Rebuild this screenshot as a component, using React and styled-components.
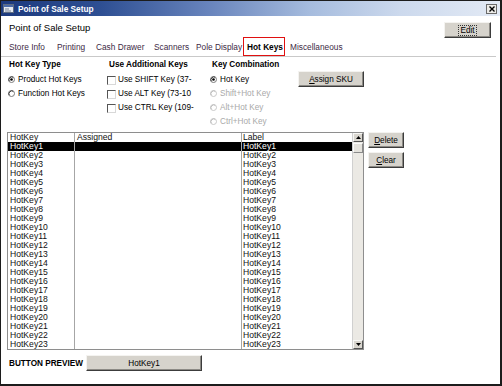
import React from 'react';
import styled, { createGlobalStyle } from 'styled-components';

const GlobalStyle = createGlobalStyle`
  html, body {
    margin: 0;
    padding: 0;
    background: #fff;
  }
  body {
    font-family: "Liberation Sans", Arial, sans-serif;
  }
`;

const Window = styled.div`
  width: 502px;
  height: 386px;
  box-sizing: border-box;
  border-style: solid;
  border-color: #1c1c1c;
  border-width: 1px 2px 2px 1px;
  background: #fff;
  display: flex;
  flex-direction: column;
  overflow: hidden;
  font-family: "Liberation Sans", Arial, sans-serif;
  color: #000;
`;

const TitleBar = styled.div`
  height: 15px;
  flex: none;
  display: flex;
  align-items: center;
  padding: 0 2px 0 2px;
  background: linear-gradient(to right, #1c3a7e 0%, #2e4f93 20%, #6985bd 42%, #a6bcde 62%, #ccd9ed 80%, #e3eaf5 100%);
`;

const TitleText = styled.span`
  margin-left: 4px;
  font-size: 8.3px;
  font-weight: bold;
  color: #fff;
  flex: 1;
`;

const CloseBox = styled.div`
  width: 9px;
  height: 8px;
  margin-right: 1px;
  border: 1px solid #6a6a6a;
  background: #ecebe8;
  display: flex;
  align-items: center;
  justify-content: center;
`;

const HeaderRow = styled.div`
  height: 16px;
  margin-top: 5px;
  display: flex;
  justify-content: space-between;
  align-items: flex-start;
  flex: none;
`;

const Heading = styled.div`
  padding-left: 8px;
  font-size: 9.5px;
  line-height: 13px;
  color: #000;
`;

const Button = styled.button`
  box-sizing: border-box;
  width: ${p => p.$w}px;
  height: 16px;
  padding: 0;
  margin: 0;
  font-family: "Liberation Sans", Arial, sans-serif;
  font-size: 8.2px;
  color: #000;
  background: #d6d3cc;
  border: 1px solid;
  border-color: #f4f3f0 #3c3c3c #3c3c3c #f4f3f0;
  box-shadow: inset -1px -1px 0 #8c8a85;
  display: flex;
  align-items: center;
  justify-content: center;
  flex: none;
  u {
    text-decoration: underline;
  }
`;

const EditButton = styled(Button)`
  margin-top: 1px;
  margin-right: 9px;
  span {
    outline: 1px dotted #333;
    padding: 0 1px;
    line-height: 9px;
  }
`;

const TabBar = styled.div`
  height: 20px;
  flex: none;
  box-sizing: border-box;
  display: flex;
  padding-left: 5px;
  margin-right: 4px;
  border-bottom: 1px solid #c9c9c9;
`;

const Tab = styled.div`
  box-sizing: border-box;
  width: ${p => (p.$w ? `${p.$w}px` : 'auto')};
  height: 19px;
  padding-left: 3px;
  margin-right: ${p => (p.$active ? 2 : 0)}px;
  display: flex;
  align-items: center;
  font-size: 8.3px;
  white-space: nowrap;
  font-weight: ${p => (p.$active ? 'bold' : 'normal')};
  color: ${p => (p.$active ? '#000' : '#3d2a45')};
  border: ${p => (p.$active ? '1px solid #e01010' : 'none')};
`;

const OptionsRow = styled.div`
  display: flex;
  margin-top: 3px;
  padding-left: 7px;
  flex: none;
`;

const Group = styled.div`
  width: ${p => p.$w}px;
  display: flex;
  flex-direction: column;
`;

const GroupTitle = styled.div`
  font-size: 8.2px;
  font-weight: bold;
  line-height: 10px;
  padding-left: ${p => p.$indent}px;
  margin-bottom: 2px;
  white-space: nowrap;
`;

const OptionRow = styled.div`
  height: 14px;
  display: flex;
  align-items: center;
  font-size: 8.2px;
  white-space: nowrap;
  color: ${p => (p.$disabled ? '#a9a9a9' : '#000')};
`;

const RadioMark = styled.svg`
  width: 7px;
  height: 7px;
  margin-right: 3px;
  flex: none;
`;

const CheckMark = styled.span`
  box-sizing: border-box;
  width: 9px;
  height: 9px;
  margin-right: 2px;
  margin-top: 2px;
  border: 1px solid;
  border-color: #555 #d8d8d8 #d8d8d8 #555;
  background: #fff;
  flex: none;
`;

const AssignButton = styled(Button)`
  margin-top: 11px;
`;

const ListArea = styled.div`
  display: flex;
  margin-top: 4px;
  padding-left: 6px;
  flex: none;
`;

const ListBox = styled.div`
  box-sizing: border-box;
  width: 357px;
  height: 218px;
  border: 1px solid #8e8e8e;
  display: flex;
  overflow: hidden;
`;

const Table = styled.div`
  flex: 1;
  display: flex;
  flex-direction: column;
`;

const Row = styled.div`
  display: grid;
  grid-template-columns: 67px 167px 1fr;
  height: 9.08px;
  line-height: 9px;
  font-size: 8.6px;
  background: ${p => (p.$selected ? '#000' : '#fff')};
  color: ${p => (p.$selected ? '#fff' : '#111')};
`;

const Cell = styled.div`
  box-sizing: border-box;
  padding-left: ${p => (p.$last ? 1 : 2)}px;
  border-right: ${p => (p.$last ? 'none' : '1px solid #a6a6a6')};
  white-space: nowrap;
  overflow: hidden;
`;

const Filler = styled.div`
  flex: 1;
  display: grid;
  grid-template-columns: 67px 167px 1fr;
`;

const ScrollBar = styled.div`
  width: 10px;
  display: flex;
  flex-direction: column;
  background: #ebe9e4;
  border-left: 1px solid #d0d0d0;
`;

const ScrollArrow = styled.div`
  box-sizing: border-box;
  height: 9px;
  background: #d9d6cf;
  border: 1px solid;
  border-color: #f7f7f5 #555 #555 #f7f7f5;
  display: flex;
  align-items: center;
  justify-content: center;
  flex: none;
`;

const ScrollThumb = styled.div`
  box-sizing: border-box;
  height: 10px;
  margin-top: 1px;
  background: #e4e2dc;
  border: 1px solid;
  border-color: #fafafa #8a8a8a #8a8a8a #fafafa;
  flex: none;
`;

const ScrollTrack = styled.div`
  flex: 1;
`;

const SideButtons = styled.div`
  display: flex;
  flex-direction: column;
  gap: 4px;
  margin-left: 4px;
`;

const PreviewRow = styled.div`
  display: flex;
  align-items: center;
  margin-top: 5px;
  flex: none;
`;

const PreviewLabel = styled.div`
  width: 77px;
  padding-left: 8px;
  font-size: 8.2px;
  font-weight: bold;
  white-space: nowrap;
`;

const Radio = ({ checked, disabled }) => (
  <RadioMark viewBox="0 0 7 7">
    <circle cx="3.5" cy="3.5" r="3" fill="#fff" stroke={disabled ? '#c8c8c8' : '#7a7a7a'} strokeWidth="1" />
    <path d="M1.2 5.2 A3 3 0 0 1 5.2 1.2" fill="none" stroke={disabled ? '#bdbdbd' : '#3a3a3a'} strokeWidth="1" />
    {checked && <circle cx="3.5" cy="3.5" r="1.3" fill={disabled ? '#aaa' : '#000'} />}
  </RadioMark>
);

const Arrow = ({ down }) => (
  <svg width="5" height="3" viewBox="0 0 5 3">
    <path d={down ? 'M0 0 H5 L2.5 3 Z' : 'M0 3 H5 L2.5 0 Z'} fill="#000" />
  </svg>
);

const tabs = [
  { label: 'Store Info', w: 48 },
  { label: 'Printing', w: 39 },
  { label: 'Cash Drawer', w: 58 },
  { label: 'Scanners', w: 42 },
  { label: 'Pole Display', w: 50 },
  { label: 'Hot Keys', w: 42, active: true },
  { label: 'Miscellaneous' },
];

const hotKeys = Array.from({ length: 23 }, (_, i) => `HotKey${i + 1}`);

export default function App() {
  return (
    <>
      <GlobalStyle />
      <Window>
        <TitleBar>
          <svg width="11" height="9" viewBox="0 0 11 9">
            <rect x="0.5" y="0.5" width="10" height="8" fill="#e6ebf2" stroke="#5f6d82" />
            <rect x="1" y="1" width="9" height="2" fill="#4a6aa8" />
            <path d="M2 5 H6 M2 7 H8" stroke="#7a8699" strokeWidth="1" />
          </svg>
          <TitleText>Point of Sale Setup</TitleText>
          <CloseBox>
            <svg width="6" height="6" viewBox="0 0 6 6">
              <path d="M0.5 0.5 L5.5 5.5 M5.5 0.5 L0.5 5.5" stroke="#000" strokeWidth="1.4" />
            </svg>
          </CloseBox>
        </TitleBar>

        <HeaderRow>
          <Heading>Point of Sale Setup</Heading>
          <EditButton $w={47}><span>Edit</span></EditButton>
        </HeaderRow>

        <TabBar>
          {tabs.map(t => (
            <Tab key={t.label} $w={t.w} $active={t.active}>{t.label}</Tab>
          ))}
        </TabBar>

        <OptionsRow>
          <Group $w={99}>
            <GroupTitle $indent={1}>Hot Key Type</GroupTitle>
            <OptionRow><Radio checked />Product Hot Keys</OptionRow>
            <OptionRow><Radio />Function Hot Keys</OptionRow>
          </Group>
          <Group $w={103}>
            <GroupTitle $indent={2}>Use Additional Keys</GroupTitle>
            <OptionRow><CheckMark />Use SHIFT Key (37-</OptionRow>
            <OptionRow><CheckMark />Use ALT Key (73-10</OptionRow>
            <OptionRow><CheckMark />Use CTRL Key (109-</OptionRow>
          </Group>
          <Group $w={88}>
            <GroupTitle $indent={2}>Key Combination</GroupTitle>
            <OptionRow><Radio checked />Hot Key</OptionRow>
            <OptionRow $disabled><Radio disabled />Shift+Hot Key</OptionRow>
            <OptionRow $disabled><Radio disabled />Alt+Hot Key</OptionRow>
            <OptionRow $disabled><Radio disabled />Ctrl+Hot Key</OptionRow>
          </Group>
          <AssignButton $w={66}><u>A</u>ssign SKU</AssignButton>
        </OptionsRow>

        <ListArea>
          <ListBox>
            <Table>
              <Row>
                <Cell>HotKey</Cell>
                <Cell>Assigned</Cell>
                <Cell $last>Label</Cell>
              </Row>
              {hotKeys.map((k, i) => (
                <Row key={k} $selected={i === 0}>
                  <Cell>{k}</Cell>
                  <Cell />
                  <Cell $last>{k}</Cell>
                </Row>
              ))}
              <Filler>
                <Cell />
                <Cell />
                <Cell $last />
              </Filler>
            </Table>
            <ScrollBar>
              <ScrollArrow><Arrow /></ScrollArrow>
              <ScrollThumb />
              <ScrollTrack />
              <ScrollArrow><Arrow down /></ScrollArrow>
            </ScrollBar>
          </ListBox>
          <SideButtons>
            <Button $w={36}><u>D</u>elete</Button>
            <Button $w={36}><u>C</u>lear</Button>
          </SideButtons>
        </ListArea>

        <PreviewRow>
          <PreviewLabel>BUTTON PREVIEW</PreviewLabel>
          <Button $w={116}>HotKey1</Button>
        </PreviewRow>
      </Window>
    </>
  );
}
